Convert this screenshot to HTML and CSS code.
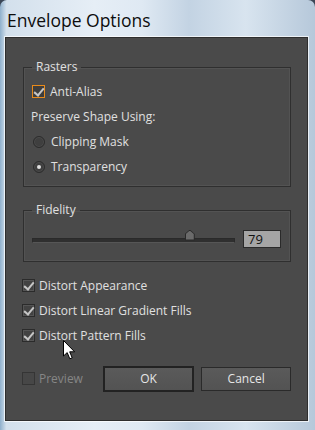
FILE: index.html
```html
<!DOCTYPE html>
<html lang="en">
<head>
    <meta charset="UTF-8">
    <title>Envelope Options</title>
    <link rel="stylesheet" href="styles.css">
</head>
<body>
    <div class="frame">
        <div class="title">Envelope Options</div>
        <div class="client">
            <fieldset class="group rasters">
                <legend>Rasters</legend>
                <label class="row">
                    <span class="box checked focus"></span>
                    <span>Anti-Alias</span>
                </label>
                <div class="row">Preserve Shape Using:</div>
                <label class="row">
                    <span class="radio"></span>
                    <span>Clipping Mask</span>
                </label>
                <label class="row">
                    <span class="radio on"></span>
                    <span>Transparency</span>
                </label>
            </fieldset>

            <fieldset class="group fidelity">
                <legend>Fidelity</legend>
                <div class="slider-row">
                    <div class="track">
                        <span class="thumb" style="left: 78%"></span>
                    </div>
                    <div class="value">79</div>
                </div>
            </fieldset>

            <div class="checks">
                <label class="row">
                    <span class="box checked"></span>
                    <span>Distort Appearance</span>
                </label>
                <label class="row">
                    <span class="box checked"></span>
                    <span>Distort Linear Gradient Fills</span>
                </label>
                <label class="row">
                    <span class="box checked"></span>
                    <span>Distort Pattern Fills</span>
                </label>
            </div>

            <div class="footer">
                <label class="row disabled">
                    <span class="box"></span>
                    <span>Preview</span>
                </label>
                <button class="btn default">OK</button>
                <button class="btn">Cancel</button>
            </div>

            <svg class="cursor" width="13" height="20" viewBox="0 0 13 20">
                <path d="M0.5 0.5 L0.5 16 L4.2 12.6 L6.8 18.8 L9.2 17.8 L6.7 11.8 L11.6 11.8 Z" fill="#fff" stroke="#000" stroke-width="1" stroke-linejoin="miter"/>
            </svg>
        </div>
    </div>
</body>
</html>
```

FILE: styles.css
```css
body {
    margin: 0;
    width: 315px;
    height: 430px;
    overflow: hidden;
    font-family: "Open Sans", "Noto Sans", sans-serif;
    background: #3b4656;
}
.frame {
    height: 430px;
    box-sizing: border-box;
    padding: 0 7px 9px 5px;
    border-radius: 7px 7px 0 0;
    background: linear-gradient(to right, #8fb0cc 0, #d3e0ec 2%, #e6eef6 30%, #dfe9f3 45%, #c3d3e3 60%, #d8e4ef 78%, #b6c8da 100%);
}
.title {
    height: 37px;
    line-height: 41px;
    padding-left: 2px;
    font-family: "Open Sans", sans-serif;
    font-size: 17.5px;
    color: #0d0d0d;
}
.client {
    position: relative;
    height: 384px;
    box-sizing: border-box;
    padding: 0 16px;
    background: #4a4a4a;
    border: 1px solid #2e2e2e;
    box-shadow: 0 0 0 1px rgba(255, 255, 255, 0.7);
    font-size: 12px;
    color: #e0e0e0;
}
.group {
    margin: 0 0 0 1px;
    border: 1px solid #2f2f2f;
    box-shadow: inset 0 0 0 1px #535353;
    padding: 0 7px;
}
.group legend {
    padding: 0 4px;
    margin-left: 1px;
    line-height: 16px;
    height: 16px;
}
.rasters {
    margin-top: 21px;
    padding-top: 4px;
    padding-bottom: 7px;
}
.row {
    display: flex;
    align-items: center;
    gap: 5px;
    height: 25px;
}
.box {
    width: 11px;
    height: 11px;
    border: 1px solid #2b2b2b;
    background: #424242;
    box-shadow: inset 0 0 0 1px #555;
    position: relative;
}
.box.focus {
    border: 1px solid #e88a1a;
    box-shadow: none;
    background: #3d3d3d;
}
.box.checked::after {
    content: "";
    position: absolute;
    left: 3px;
    top: 0px;
    width: 4px;
    height: 8px;
    border-right: 2px solid #c6c6c6;
    border-bottom: 2px solid #c6c6c6;
    transform: rotate(40deg);
}
.rasters .box {
    margin-left: 1px;
}
.radio {
    width: 10px;
    height: 10px;
    margin-left: 2px;
    margin-right: 1px;
    border-radius: 50%;
    border: 1px solid #2c2c2c;
    background: #3f3f3f;
    box-shadow: inset 0 0 0 1px #4c4c4c;
    position: relative;
}
.radio.on::after {
    content: "";
    position: absolute;
    left: 3px;
    top: 3px;
    width: 4px;
    height: 4px;
    border-radius: 50%;
    background: #e0e0e0;
}
.fidelity {
    margin-top: 15px;
    padding-top: 11px;
    padding-bottom: 12px;
}
.slider-row {
    display: flex;
    align-items: center;
    height: 20px;
    padding-left: 1px;
    padding-right: 2px;
}
.track {
    position: relative;
    flex: 1;
    height: 3px;
    margin-top: 2px;
    background: #2f2f2f;
    border: 1px solid #2a2a2a;
    border-bottom-color: #565656;
}
.thumb {
    position: absolute;
    top: -9px;
    width: 10px;
    height: 11px;
    margin-left: -5px;
    background: #2a2a2a;
    clip-path: polygon(50% 0, 100% 40%, 100% 100%, 0 100%, 0 40%);
}
.thumb::after {
    content: "";
    position: absolute;
    left: 1px;
    top: 1px;
    right: 1px;
    bottom: 1px;
    background: #6b6b6b;
    clip-path: polygon(50% 0, 100% 40%, 100% 100%, 0 100%, 0 40%);
}
.value {
    width: 36px;
    height: 16px;
    margin-left: 8px;
    border: 1px solid #2a2a2a;
    background: #a5a5a5;
    color: #111;
    font-size: 13px;
    line-height: 16px;
    text-indent: 4px;
}
.checks {
    margin-top: 11px;
}
.checks .row {
    gap: 4px;
}
.footer {
    display: flex;
    align-items: center;
    margin-top: 17px;
    height: 27px;
}
.footer .row {
    gap: 4px;
    width: 81px;
}
.disabled {
    color: #868686;
}
.disabled .box {
    border-color: #353535;
    background: #474747;
    box-shadow: none;
}
.btn {
    font-family: inherit;
    font-size: 12px;
    color: #e6e6e6;
    background: linear-gradient(#5a5a5a, #535353);
    border: 1px solid #2a2a2a;
    height: 24px;
    width: 90px;
    padding: 0;
}
.btn.default {
    border: 2px solid #222;
    height: 26px;
    width: 92px;
    margin-right: 7px;
}
.cursor {
    position: absolute;
    left: 57px;
    top: 302px;
}
```
